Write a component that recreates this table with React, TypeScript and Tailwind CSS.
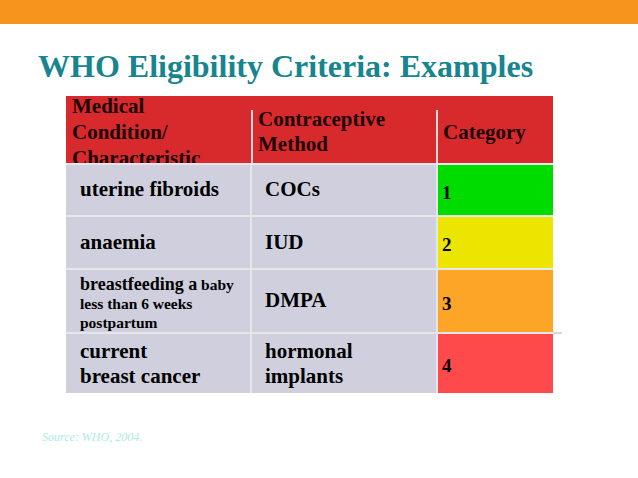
import React from 'react';

type Row = {
  condition: React.ReactNode;
  method: React.ReactNode;
  category: string;
  color: string;
  height: string;
};

const rows: Row[] = [
  { condition: 'uterine fibroids', method: 'COCs', category: '1', color: 'bg-[#00dc00]', height: 'h-[50px]' },
  { condition: 'anaemia', method: 'IUD', category: '2', color: 'bg-[#ece500]', height: 'h-[51px]' },
  {
    condition: (
      <div className="leading-[19px] text-[15.5px] pt-[4px]">
        <div>
          <span className="text-[18px]">breastfeeding a</span> baby
        </div>
        <div>less than 6 weeks</div>
        <div>postpartum</div>
      </div>
    ),
    method: 'DMPA',
    category: '3',
    color: 'bg-[#fca526]',
    height: 'h-[62px]',
  },
  {
    condition: (
      <div className="leading-[25px]">
        <div>current</div>
        <div>breast cancer</div>
      </div>
    ),
    method: (
      <div className="leading-[25px]">
        <div>hormonal</div>
        <div>implants</div>
      </div>
    ),
    category: '4',
    color: 'bg-[#ff4a4b]',
    height: 'h-[59px]',
  },
];

export default function App() {
  return (
    <div className="w-[638px] h-[478px] bg-white overflow-hidden font-['Liberation_Serif','Times_New_Roman',serif]">
      <div className="h-[24px] bg-[#f7941e]" />

      <h1 className="mt-[25px] pl-[38px] text-[32px] leading-[34px] font-bold text-[#16858e]">
        WHO Eligibility Criteria: Examples
      </h1>

      {/* Table */}
      <div className="relative mt-[13px] ml-[66px] w-[487px] bg-[#e6e6ea] flex flex-col gap-[2px] text-[21px] font-bold">
        <div className="flex h-[67px] bg-[#d8292d] text-[#1c0404]">
          <div className="w-[185px] pl-[6px] leading-[26px] overflow-hidden">
            <div className="-mt-[3px]">Medical</div>
            <div>Condition/</div>
            <div>Characteristic</div>
          </div>
          <div className="w-[2px] mt-[14px] bg-[#f0dada]" />
          <div className="w-[183px] pl-[5px] pt-[11px] leading-[25px]">
            <div>Contraceptive</div>
            <div>Method</div>
          </div>
          <div className="w-[2px] mt-[14px] bg-[#f0dada]" />
          <div className="flex-1 flex items-center pl-[5px] pt-[6px]">Category</div>
        </div>

        {rows.map((r, i) => (
          <div key={i} className={`flex gap-[2px] ${r.height} text-black`}>
            <div className="w-[184px] bg-[#cfcfdd] flex items-center pl-[14px]">{r.condition}</div>
            <div className="w-[184px] bg-[#cfcfdd] flex items-center pl-[13px]">{r.method}</div>
            <div className={`flex-1 ${r.color} flex items-center pl-[4px] pt-[6px] text-[19px]`}>{r.category}</div>
          </div>
        ))}

        {/* stray rule poking out right of row 3 */}
        <div className="absolute left-[487px] top-[236px] w-[9px] h-[2px] bg-[#d6d6dc]" />
      </div>

      <div className="mt-[35px] pl-[42px] text-[12px] italic text-[#aee9e2]">Source: WHO, 2004.</div>
    </div>
  );
}
